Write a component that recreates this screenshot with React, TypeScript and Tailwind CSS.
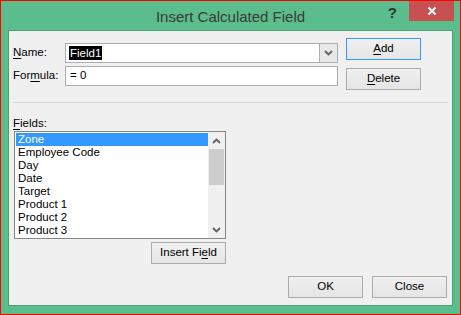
import React from 'react';

const font = { fontFamily: '"Liberation Sans", Arial, sans-serif' };

const fields = ['Zone', 'Employee Code', 'Day', 'Date', 'Target', 'Product 1', 'Product 2', 'Product 3'];

const Chevron: React.FC<{ dir: 'up' | 'down'; className?: string }> = ({ dir, className }) => (
  <svg width="9" height="6" viewBox="0 0 9 6" className={className}>
    {dir === 'up' ? (
      <path d="M1 5 L4.5 1.5 L8 5" fill="none" stroke="#606060" strokeWidth="1.8" />
    ) : (
      <path d="M1 1 L4.5 4.5 L8 1" fill="none" stroke="#606060" strokeWidth="1.8" />
    )}
  </svg>
);

interface BtnProps {
  children: React.ReactNode;
  focused?: boolean;
  className?: string;
}

const DlgButton: React.FC<BtnProps> = ({ children, focused, className = '' }) => (
  <button
    className={`w-[75px] h-[22px] flex items-center justify-center text-[11.5px] text-black bg-gradient-to-b from-[#f0f0f0] to-[#e5e5e5] border ${
      focused ? 'border-[#3399ff]' : 'border-[#acacac]'
    } ${className}`}
  >
    {children}
  </button>
);

export default function App() {
  return (
    <div style={font} className="w-[461px] h-[315px] bg-[#5bbd8b] border border-[#ff0000] flex flex-col">
      {/* title bar */}
      <div className="h-[29px] grid grid-cols-[1fr_auto_1fr] items-start">
        <div />
        <div className="text-[15px] leading-[29px] text-[#3a3a3a] pt-[1px]">Insert Calculated Field</div>
        <div className="flex justify-end items-start">
          <span className="mt-[3px] mr-[12px] text-[15px] font-bold text-[#333333] leading-[18px]">?</span>
          <div className="w-[45px] h-[20px] mr-[6px] bg-[#c75050] flex items-center justify-center">
            <svg width="10" height="10" viewBox="0 0 10 10">
              <path d="M1.5 1.5 L8.5 8.5 M8.5 1.5 L1.5 8.5" stroke="#ffffff" strokeWidth="2" />
            </svg>
          </div>
        </div>
      </div>

      {/* content */}
      <div className="ml-[7px] w-[445px] h-[276px] bg-[#f0f0f0] border border-[#4e9e75] flex flex-col text-[11.5px] text-black">
        <div className="h-[71px] pl-[4px] flex items-start">
          <div className="mt-[12px] flex flex-col gap-[3px]">
            <div className="flex items-center h-[20px]">
              <span className="w-[52px]">
                <u className="underline-offset-2">N</u>ame:
              </span>
              <div className="w-[273px] h-[20px] bg-white border border-[#abadb3] flex items-center">
                <span className="ml-[3px] h-[14px] px-[1px] bg-black text-white leading-[14px]">Field1</span>
                <div className="flex-1" />
                <div className="w-[18px] h-full bg-[#e8e8e8] border-l border-[#abadb3] flex items-center justify-center">
                  <Chevron dir="down" />
                </div>
              </div>
            </div>
            <div className="flex items-center h-[20px]">
              <span className="w-[52px]">
                For<u className="underline-offset-2">m</u>ula:
              </span>
              <div className="w-[273px] h-[20px] bg-white border border-[#abadb3] flex items-center">
                <span className="ml-[4px]">= 0</span>
              </div>
            </div>
          </div>
          <div className="ml-[8px] mt-[7px] flex flex-col gap-[8px]">
            <DlgButton focused>
              <u className="underline-offset-2">A</u>dd
            </DlgButton>
            <DlgButton>
              <u className="underline-offset-2">D</u>elete
            </DlgButton>
          </div>
        </div>

        <div className="ml-[4px] w-[435px] h-px bg-[#d8d8d8]" />

        <div className="mt-[12px] pl-[4px] leading-[16px]">
          <u className="underline-offset-2">F</u>ields:
        </div>

        <div className="ml-[5px] w-[212px] h-[108px] bg-white border border-[#828790] flex">
          <div className="w-[193px] pl-[1px] pt-[1px] flex flex-col">
            {fields.map((f, i) => (
              <div
                key={f}
                className={`h-[13px] leading-[13px] pl-[2px] ${i === 0 ? 'bg-[#3399ff] text-white' : ''}`}
              >
                {f}
              </div>
            ))}
          </div>
          <div className="w-[17px] bg-[#f0f0f0] flex flex-col items-center">
            <div className="h-[17px] flex items-center justify-center">
              <Chevron dir="up" />
            </div>
            <div className="w-[15px] h-[36px] bg-[#cdcdcd]" />
            <div className="flex-1" />
            <div className="h-[17px] flex items-center justify-center">
              <Chevron dir="down" />
            </div>
          </div>
        </div>

        <DlgButton className="ml-[142px] mt-[3px]">
          Insert Fi<u className="underline-offset-2">e</u>ld
        </DlgButton>

        <div className="mt-[12px] pr-[5px] flex justify-end gap-[9px]">
          <DlgButton>OK</DlgButton>
          <DlgButton>Close</DlgButton>
        </div>
      </div>
    </div>
  );
}
